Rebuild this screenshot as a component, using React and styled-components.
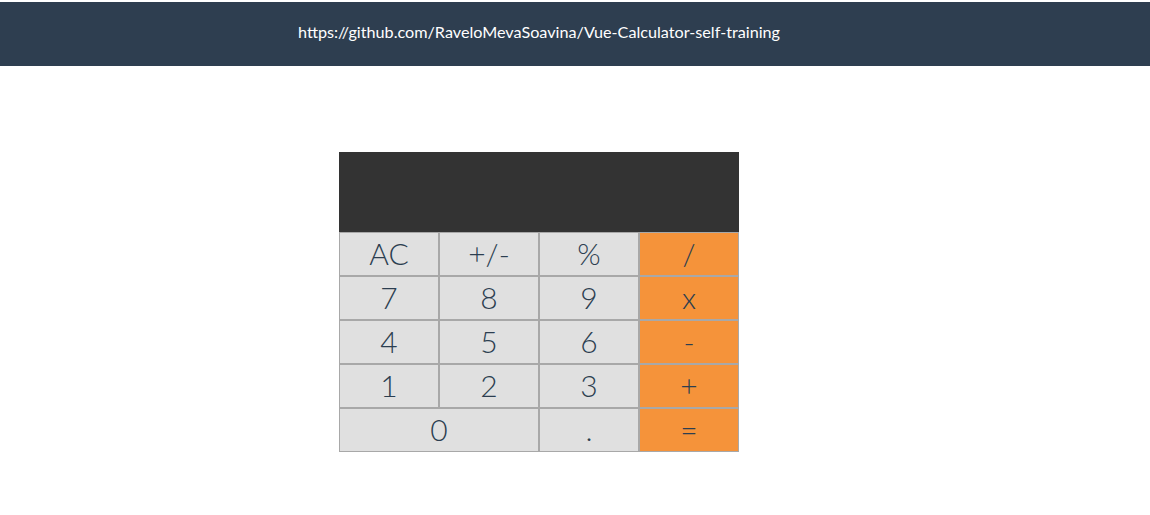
import styled, { createGlobalStyle } from "styled-components";

const GlobalStyle = createGlobalStyle`
  html, body {
    margin: 0;
    padding: 0;
    background: #ffffff;
  }
  body {
    font-family: Lato, "Noto Sans", sans-serif;
  }
`;

const Page = styled.div`
  width: 1078px;
  padding-top: 2px;
  display: flex;
  flex-direction: column;
  align-items: center;
`;

const Header = styled.header`
  width: 1150px;
  align-self: flex-start;
  height: 64px;
  background: #2e3e50;
  display: flex;
  align-items: center;
  justify-content: center;
  box-sizing: border-box;
  padding-right: 72px;
  padding-bottom: 6px;
`;

const Link = styled.a`
  color: #ffffff;
  font-family: Lato, sans-serif;
  font-size: 16.2px;
  font-weight: 400;
  text-decoration: none;
`;

const Calculator = styled.div`
  margin-top: 86px;
  width: 400px;
  display: flex;
  flex-direction: column;
`;

const Display = styled.div`
  height: 80px;
  background: #333333;
  color: #ffffff;
`;

const Keypad = styled.div`
  display: grid;
  grid-template-columns: repeat(4, 100px);
  grid-auto-rows: 44px;
`;

const Key = styled.div`
  grid-column: span ${(p) => p.$span || 1};
  box-sizing: border-box;
  border: 1px solid #a8a8a8;
  background: ${(p) => (p.$op ? "#f5933a" : "#e0e0e0")};
  color: #2c3e50;
  font-family: Lato, sans-serif;
  font-weight: 300;
  font-size: 30px;
  display: flex;
  align-items: center;
  justify-content: center;
  padding-bottom: 2px;
  user-select: none;
`;

const keys = [
  { label: "AC" },
  { label: "+/-" },
  { label: "%" },
  { label: "/", op: true },
  { label: "7" },
  { label: "8" },
  { label: "9" },
  { label: "x", op: true },
  { label: "4" },
  { label: "5" },
  { label: "6" },
  { label: "-", op: true },
  { label: "1" },
  { label: "2" },
  { label: "3" },
  { label: "+", op: true },
  { label: "0", span: 2 },
  { label: "." },
  { label: "=", op: true },
];

const App = () => {
  return (
    <>
      <GlobalStyle />
      <Page>
        <Header>
          <Link href="https://github.com/RaveloMevaSoavina/Vue-Calculator-self-training">
            https://github.com/RaveloMevaSoavina/Vue-Calculator-self-training
          </Link>
        </Header>
        <Calculator>
          <Display />
          <Keypad>
            {keys.map((k) => (
              <Key key={k.label} $op={k.op} $span={k.span}>
                {k.label}
              </Key>
            ))}
          </Keypad>
        </Calculator>
      </Page>
    </>
  );
};

export default App;
